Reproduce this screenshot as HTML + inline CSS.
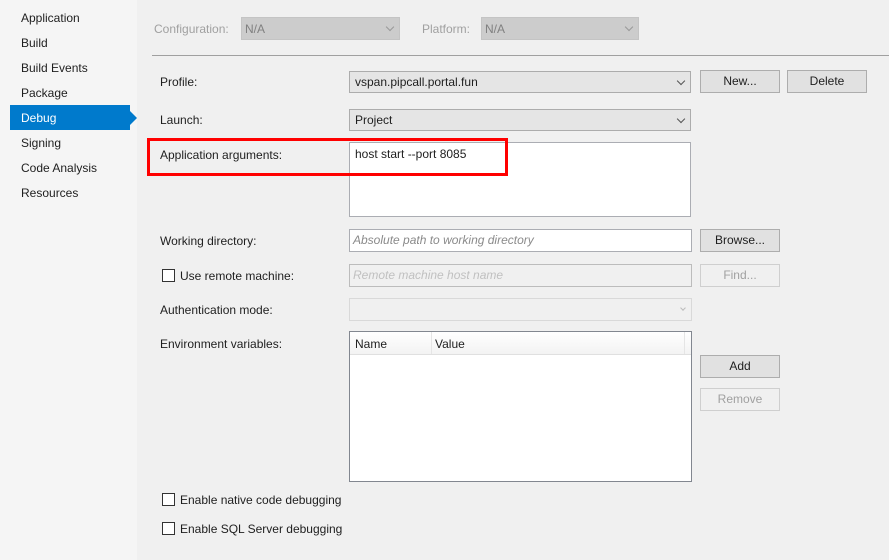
<!DOCTYPE html>
<html><head><style>
*{box-sizing:border-box;margin:0;padding:0}
body{width:889px;height:560px;background:#f0f0f0;font-family:"Liberation Sans","DejaVu Sans",sans-serif;font-size:12px;color:#1e1e1e;position:relative;overflow:hidden}
.a{position:absolute}
.side{left:0;top:0;width:137px;height:560px;background:#f5f5f5}
.nav{left:21px;font-size:12px;color:#1e1e1e}
.lbl{left:160px;font-size:12px}
.box{background:#fff;border:1px solid #abadb3}
.dis{background:#f0f0f0;border:1px solid #d9d9d9}
.btn{background:#e1e1e1;border:1px solid #adadad;text-align:center;line-height:20px}
.btnd{background:#f0f0f0;border:1px solid #cfcfcf;color:#a0a0a0;text-align:center;line-height:20px}
.chev{position:absolute;right:6px;top:6px;width:6px;height:6px;border-right:1px solid #555;border-bottom:1px solid #555;transform:rotate(45deg)}
.cb{width:13px;height:13px;background:#fff;border:1px solid #333}
.ph{font-style:italic;color:#8a8a8a;padding-left:3px;line-height:20px}
</style></head><body>
<div class="a side"></div>
<div class="a nav" style="top:11px">Application</div>
<div class="a nav" style="top:36px">Build</div>
<div class="a nav" style="top:61px">Build Events</div>
<div class="a nav" style="top:86px">Package</div>
<div class="a" style="left:10px;top:105px;width:120px;height:25px;background:#007acc"></div>
<div class="a" style="left:130px;top:111px;width:0;height:0;border-top:7px solid transparent;border-bottom:7px solid transparent;border-left:7px solid #007acc"></div>
<div class="a nav" style="top:111px;color:#fff">Debug</div>
<div class="a nav" style="top:136px">Signing</div>
<div class="a nav" style="top:161px">Code Analysis</div>
<div class="a nav" style="top:186px">Resources</div>

<div class="a" style="left:154px;top:22px;color:#a0a0a0">Configuration:</div>
<div class="a" style="left:241px;top:17px;width:159px;height:23px;background:#cccccc;border:1px solid #c4c4c4;color:#808080;padding:4px 3px">N/A<span class="chev" style="border-color:#999"></span></div>
<div class="a" style="left:422px;top:22px;color:#a0a0a0">Platform:</div>
<div class="a" style="left:481px;top:17px;width:158px;height:23px;background:#cccccc;border:1px solid #c4c4c4;color:#808080;padding:4px 3px">N/A<span class="chev" style="border-color:#999"></span></div>
<div class="a" style="left:152px;top:55px;width:737px;height:1px;background:#a0a0a0"></div>

<div class="a lbl" style="top:75px">Profile:</div>
<div class="a" style="left:349px;top:71px;width:342px;height:22px;background:#e5e5e5;border:1px solid #acacac;padding:3px 5px">vspan.pipcall.portal.fun<span class="chev"></span></div>
<div class="a btn" style="left:700px;top:70px;width:80px;height:23px">New...</div>
<div class="a btn" style="left:787px;top:70px;width:80px;height:23px">Delete</div>

<div class="a lbl" style="top:113px">Launch:</div>
<div class="a" style="left:349px;top:109px;width:342px;height:22px;background:#e5e5e5;border:1px solid #acacac;padding:3px 5px">Project<span class="chev"></span></div>

<div class="a lbl" style="top:148px">Application arguments:</div>
<div class="a box" style="left:349px;top:142px;width:342px;height:75px;padding:4px 5px">host start --port 8085</div>
<div class="a" style="left:147px;top:138px;width:361px;height:38px;border:3px solid #f00"></div>

<div class="a lbl" style="top:234px">Working directory:</div>
<div class="a box ph" style="left:349px;top:229px;width:343px;height:23px">Absolute path to working directory</div>
<div class="a btn" style="left:700px;top:229px;width:80px;height:23px">Browse...</div>

<div class="a cb" style="left:162px;top:269px"></div>
<div class="a" style="left:180px;top:269px">Use remote machine:</div>
<div class="a dis ph" style="left:349px;top:264px;width:343px;height:23px;border-color:#bcbcbc;color:#c0c0c0">Remote machine host name</div>
<div class="a btnd" style="left:700px;top:264px;width:80px;height:23px">Find...</div>

<div class="a lbl" style="top:303px">Authentication mode:</div>
<div class="a dis" style="left:349px;top:298px;width:343px;height:23px"><span class="chev" style="border-color:#bbb;width:4px;height:4px;top:7px"></span></div>

<div class="a lbl" style="top:337px">Environment variables:</div>
<div class="a box" style="left:349px;top:331px;width:343px;height:151px;border-color:#828790">
 <div style="height:23px;background:linear-gradient(#fff,#f3f3f3);border-bottom:1px solid #e0e0e0;position:relative">
  <span class="a" style="left:5px;top:5px">Name</span>
  <span class="a" style="left:81px;top:0;width:1px;height:22px;background:#e5e5e5"></span>
  <span class="a" style="left:85px;top:5px">Value</span>
  <span class="a" style="left:334px;top:0;width:1px;height:22px;background:#e5e5e5"></span>
 </div>
</div>
<div class="a btn" style="left:700px;top:355px;width:80px;height:23px">Add</div>
<div class="a btnd" style="left:700px;top:388px;width:80px;height:23px">Remove</div>

<div class="a cb" style="left:162px;top:493px"></div>
<div class="a" style="left:180px;top:493px">Enable native code debugging</div>
<div class="a cb" style="left:162px;top:522px"></div>
<div class="a" style="left:180px;top:522px">Enable SQL Server debugging</div>
</body></html>
